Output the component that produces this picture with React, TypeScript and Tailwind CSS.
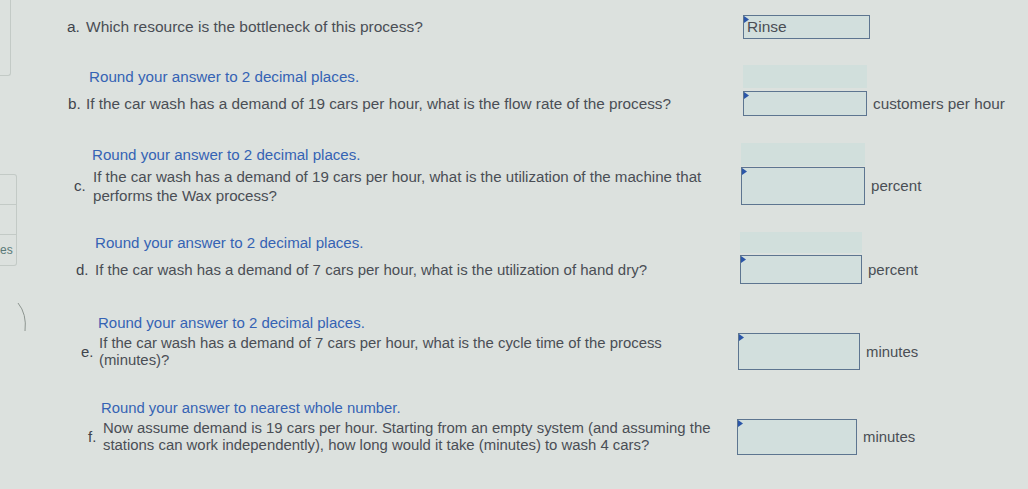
type Question = {
  label: string;
  lines: string[];
  hint?: string;
  unit?: string;
  value?: string;
  gapTop: string;
  labelPad: string;
  labelW: string;
  hintPad: string;
  leftW: string;
  inputW: string;
  inputH: string;
  inputGap: string;
  showBlock: boolean;
  hintH: string;
  textSize: string;
  hintSize: string;
  lineH: string;
};

const questions: Question[] = [
  {
    label: 'a.',
    lines: ['Which resource is the bottleneck of this process?'],
    value: 'Rinse',
    gapTop: 'mt-[15px]',
    labelPad: 'pl-[37px]',
    labelW: 'w-[19px]',
    hintPad: 'pl-[59px]',
    leftW: 'w-[713px]',
    inputW: 'w-[127px]',
    inputH: 'h-[24px]',
    inputGap: '',
    showBlock: false,
    hintH: 'h-0',
    textSize: 'text-[15.5px]',
    hintSize: 'text-[15.2px]',
    lineH: 'leading-[18px]',
  },
  {
    label: 'b.',
    hint: 'Round your answer to 2 decimal places.',
    lines: ['If the car wash has a demand of 19 cars per hour, what is the flow rate of the process?'],
    unit: 'customers per hour',
    gapTop: 'mt-[26px]',
    labelPad: 'pl-[38px]',
    labelW: 'w-[18px]',
    hintPad: 'pl-[59px]',
    leftW: 'w-[713px]',
    inputW: 'w-[124px]',
    inputH: 'h-[25px]',
    inputGap: 'mt-[3px]',
    showBlock: true,
    hintH: 'h-[23px]',
    textSize: 'text-[15.3px]',
    hintSize: 'text-[15.2px]',
    lineH: 'leading-[18px]',
  },
  {
    label: 'c.',
    hint: 'Round your answer to 2 decimal places.',
    lines: [
      'If the car wash has a demand of 19 cars per hour, what is the utilization of the machine that',
      'performs the Wax process?',
    ],
    unit: 'percent',
    gapTop: 'mt-[27px]',
    labelPad: 'pl-[44px]',
    labelW: 'w-[19px]',
    hintPad: 'pl-[62px]',
    leftW: 'w-[711px]',
    inputW: 'w-[124px]',
    inputH: 'h-[38px]',
    inputGap: 'mt-[1px]',
    showBlock: true,
    hintH: 'h-[23px]',
    textSize: 'text-[15.1px]',
    hintSize: 'text-[15.1px]',
    lineH: 'leading-[19px]',
  },
  {
    label: 'd.',
    hint: 'Round your answer to 2 decimal places.',
    lines: ['If the car wash has a demand of 7 cars per hour, what is the utilization of hand dry?'],
    unit: 'percent',
    gapTop: 'mt-[27px]',
    labelPad: 'pl-[46px]',
    labelW: 'w-[19px]',
    hintPad: 'pl-[65px]',
    leftW: 'w-[710px]',
    inputW: 'w-[122px]',
    inputH: 'h-[29px]',
    inputGap: 'mt-[2px]',
    showBlock: true,
    hintH: 'h-[21px]',
    textSize: 'text-[15px]',
    hintSize: 'text-[15.1px]',
    lineH: 'leading-[18px]',
  },
  {
    label: 'e.',
    hint: 'Round your answer to 2 decimal places.',
    lines: ['If the car wash has a demand of 7 cars per hour, what is the cycle time of the process', '(minutes)?'],
    unit: 'minutes',
    gapTop: 'mt-[30px]',
    labelPad: 'pl-[51px]',
    labelW: 'w-[18px]',
    hintPad: 'pl-[68px]',
    leftW: 'w-[708px]',
    inputW: 'w-[122px]',
    inputH: 'h-[37px]',
    inputGap: 'mt-[1px]',
    showBlock: false,
    hintH: 'h-[18px]',
    textSize: 'text-[14.9px]',
    hintSize: 'text-[15px]',
    lineH: 'leading-[17px]',
  },
  {
    label: 'f.',
    hint: 'Round your answer to nearest whole number.',
    lines: [
      'Now assume demand is 19 cars per hour. Starting from an empty system (and assuming the',
      'stations can work independently), how long would it take (minutes) to wash 4 cars?',
    ],
    unit: 'minutes',
    gapTop: 'mt-[29px]',
    labelPad: 'pl-[58px]',
    labelW: 'w-[15px]',
    hintPad: 'pl-[71px]',
    leftW: 'w-[707px]',
    inputW: 'w-[120px]',
    inputH: 'h-[36px]',
    inputGap: 'mt-[2px]',
    showBlock: false,
    hintH: 'h-[18px]',
    textSize: 'text-[14.9px]',
    hintSize: 'text-[14.85px]',
    lineH: 'leading-[17px]',
  },
];

function Marker() {
  return (
    <svg className="absolute left-0 top-0 h-[7px] w-[5px]" viewBox="0 0 5 7">
      <path d="M0 0 L5 3.5 L0 7 Z" fill="#2b56a8" />
    </svg>
  );
}

function AnswerBox({ q }: { q: Question }) {
  return (
    <div className={`relative flex shrink-0 items-center border border-[#5d7590] bg-[#d2dfdd] ${q.inputW} ${q.inputH}`}>
      <Marker />
      {q.value && <span className="pl-[3px] text-[15.5px] text-[#4a4e55]">{q.value}</span>}
    </div>
  );
}

function QuestionBlock({ q }: { q: Question }) {
  return (
    <div className={q.gapTop}>
      {q.hint && (
        <div className={`flex items-center ${q.hintH}`}>
          <div className={`${q.leftW} ${q.hintPad} ${q.hintSize} leading-[18px] text-[#3563b4]`}>{q.hint}</div>
          {q.showBlock && <div className={`h-full bg-[#d1dfdc] ${q.inputW}`} />}
        </div>
      )}
      <div className={`flex items-center ${q.inputH} ${q.inputGap}`}>
        <div className={`flex shrink-0 items-center ${q.leftW} ${q.labelPad} ${q.textSize}`}>
          <span className={`shrink-0 leading-[18px] text-[#3f444c] ${q.labelW}`}>{q.label}</span>
          <div className={`${q.lineH} text-[#4a4e55]`}>
            {q.lines.map((line) => (
              <div key={line} className="whitespace-nowrap">
                {line}
              </div>
            ))}
          </div>
        </div>
        <AnswerBox q={q} />
        {q.unit && <span className={`ml-[6px] whitespace-nowrap leading-[18px] text-[#4a4e55] ${q.textSize}`}>{q.unit}</span>}
      </div>
    </div>
  );
}

export default function App() {
  return (
    <div className="flex h-[489px] w-[1028px] overflow-hidden bg-[#dce1de] font-['Liberation_Sans',Arial,sans-serif]">
      <div className="flex w-[30px] shrink-0 flex-col">
        <div className="h-[76px] w-[11px] rounded-br-[3px] border-b border-r border-[#c3cac6]" />
        <div className="mt-[98px] flex h-[92px] w-[17px] flex-col rounded-r-[3px] border border-l-0 border-[#c3cac6]">
          <div className="h-[30px] border-b border-[#c3cac6]" />
          <div className="h-[30px] border-b border-[#c3cac6]" />
          <div className="flex flex-1 items-center text-[12px] leading-none text-[#5a7a78]">es</div>
        </div>
        <svg className="ml-[16px] mt-[36px] h-[30px] w-[12px]" viewBox="0 0 12 30">
          <path d="M2 1 Q11 12 9 29" fill="none" stroke="#8d9590" strokeWidth="1" />
        </svg>
      </div>
      <div className="flex-1">
        {questions.map((q) => (
          <QuestionBlock key={q.label} q={q} />
        ))}
      </div>
    </div>
  );
}
